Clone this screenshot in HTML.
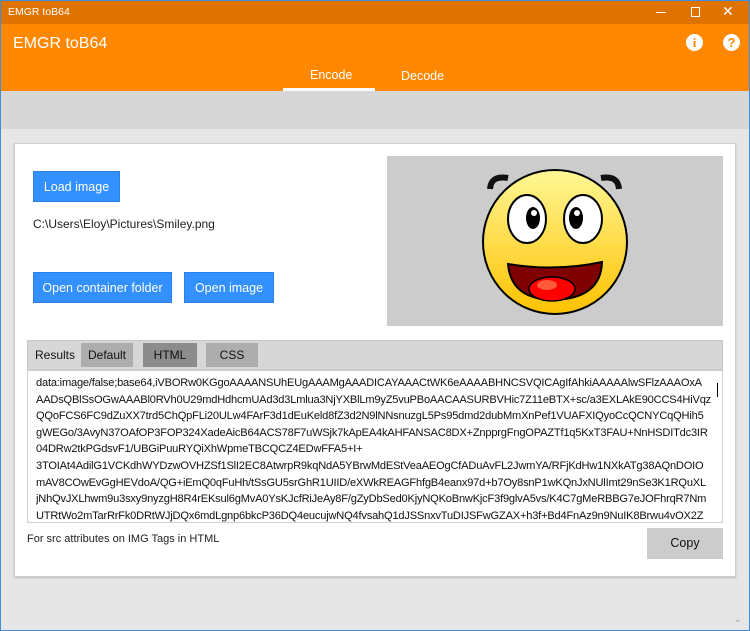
<!DOCTYPE html><html><head><style>
*{margin:0;padding:0;box-sizing:border-box}
body{width:750px;height:631px;overflow:hidden;font-family:"Liberation Sans",sans-serif;background:#e6e6e6;position:relative}
.a{position:absolute}
.btn{position:absolute;background:#3390ff;border:1px solid #2a80e8;color:#fff;font-size:12.5px;display:flex;align-items:center;justify-content:center}
.tx div{white-space:nowrap;overflow:hidden;height:16.6px}
</style></head><body>
<div class="a" style="left:0;top:0;width:750px;height:631px;border:1px solid #3c8fe0;z-index:5"></div>
<div class="a" style="left:0;top:0;width:750px;height:24px;background:#de7300"></div>
<div class="a" style="left:8px;top:6px;color:#fff;font-size:10.5px">EMGR toB64</div>
<div class="a" style="left:656px;top:12px;width:10px;height:1px;background:#fff"></div>
<div class="a" style="left:691px;top:7px;width:9px;height:10px;border:1px solid #fff"></div>
<div class="a" style="left:722px;top:3px;color:#fff;font-size:14px">✕</div>
<div class="a" style="left:0;top:24px;width:750px;height:67px;background:#ff8800"></div>
<div class="a" style="left:13px;top:35px;color:#fff;font-size:16px">EMGR toB64</div>
<div class="a" style="left:686px;top:34px;width:17px;height:17px;border-radius:50%;background:#fff;color:#ff8800;font:bold 13px 'Liberation Serif',serif;text-align:center;line-height:17px">i</div>
<div class="a" style="left:723px;top:34px;width:17px;height:17px;border-radius:50%;background:#fff;color:#ff8800;font:bold 13px 'Liberation Sans',sans-serif;text-align:center;line-height:17px">?</div>
<div class="a" style="left:310px;top:68px;color:#fff;font-size:12.5px">Encode</div>
<div class="a" style="left:401px;top:69px;color:#fff;font-size:12.5px">Decode</div>
<div class="a" style="left:283px;top:88px;width:92px;height:3px;background:#fff"></div>
<div class="a" style="left:0;top:91px;width:750px;height:38px;background:#d7d7d7"></div>
<div class="a" style="left:14px;top:143px;width:722px;height:434px;background:#fff;border:1px solid #cfcfcf;box-shadow:0 1px 2px #bbb"></div>
<div class="btn" style="left:33px;top:171px;width:87px;height:31px">Load image</div>
<div class="a" style="left:33px;top:217px;font-size:12px;color:#222">C:\Users\Eloy\Pictures\Smiley.png</div>
<div class="btn" style="left:33px;top:272px;width:139px;height:31px">Open container folder</div>
<div class="btn" style="left:184px;top:272px;width:90px;height:31px">Open image</div>
<div class="a" style="left:387px;top:156px;width:336px;height:170px;background:#cccccc">
<svg width="336" height="170" viewBox="0 0 336 170">
<defs><linearGradient id="g" x1="0" y1="0" x2="0" y2="1"><stop offset="0" stop-color="#fff796"/><stop offset="1" stop-color="#ffc200"/></linearGradient></defs>
<path d="M103 33 Q104 19 121 22" stroke="#111" stroke-width="6" fill="none"/>
<path d="M232 33 Q231 19 214 22" stroke="#111" stroke-width="6" fill="none"/>
<circle cx="168" cy="86" r="72" fill="url(#g)" stroke="#000" stroke-width="2"/>
<ellipse cx="140" cy="63" rx="19" ry="24" fill="#fff" stroke="#000" stroke-width="2"/>
<ellipse cx="196" cy="63" rx="19" ry="24" fill="#fff" stroke="#000" stroke-width="2"/>
<ellipse cx="146" cy="62" rx="7" ry="11" fill="#000"/><circle cx="147" cy="57" r="3" fill="#fff"/>
<ellipse cx="189" cy="62" rx="7" ry="11" fill="#000"/><circle cx="190" cy="57" r="3" fill="#fff"/>
<path d="M121 108 Q168 116 215 106 Q214 142 168 144 Q124 144 121 108Z" fill="#800000" stroke="#000" stroke-width="2"/>
<ellipse cx="165" cy="133" rx="23" ry="12" fill="#f00" stroke="#000" stroke-width="1.5"/>
<ellipse cx="160" cy="129" rx="10" ry="5" fill="#ff5a3a"/>
</svg></div>
<div class="a" style="left:27px;top:340px;width:696px;height:30px;background:#d7d7d7;border:1px solid #c8c8c8"></div>
<div class="a" style="left:35px;top:348px;font-size:12px;color:#111">Results</div>
<div class="a" style="left:81px;top:343px;width:52px;height:24px;background:#adadad;font-size:12px;text-align:center;line-height:24px;color:#111">Default</div>
<div class="a" style="left:143px;top:343px;width:54px;height:24px;background:#8c8c8c;font-size:12px;text-align:center;line-height:24px;color:#111">HTML</div>
<div class="a" style="left:206px;top:343px;width:52px;height:24px;background:#adadad;font-size:12px;text-align:center;line-height:24px;color:#111">CSS</div>
<div class="a tx" style="left:27px;top:370px;width:696px;height:153px;border:1px solid #cfcfcf;padding:6px 8px;font-size:11.1px;color:#111;overflow:hidden;letter-spacing:-0.2px">
<div>data:image/false;base64,iVBORw0KGgoAAAANSUhEUgAAAMgAAADICAYAAACtWK6eAAAABHNCSVQICAgIfAhkiAAAAAlwSFlzAAAOxA</div>
<div>AADsQBlSsOGwAAABl0RVh0U29mdHdhcmUAd3d3Lmlua3NjYXBlLm9yZ5vuPBoAACAASURBVHic7Z11eBTX+sc/a3EXLAkE90CCS4HiVqz</div>
<div>QQoFCS6FC9dZuXX7trd5ChQpFLi20ULw4FArF3d1dEuKeld8fZ3d2N9lNNsnuzgL5Ps95dmd2dubMmXnPef1VUAFXIQyoCcQCNYCqQHih5</div>
<div>gWEGo/3AvyN37OAfOP3FOP324XadeAicB64ACS78F7uWSjk7kApEA4kAHFANSAC8DX+ZnpprgFngOPAZTf1q5KxT3FAU+NnHSDITdc3IR</div>
<div>04DRw2tkPGdsvF1/UBGiPuuRYQiXhWpmeTBCQCZ4EDwFFA5+I+</div>
<div>3TOIAt4AdilG1VCKdhWYDzwOVHZSf1SlI2EC8AtwrpR9kqNdA5YBrwMdEStVeaAEOgCfADuAvFL2JwmYA/RFjKdHw1NXkATg38AQnDOIO</div>
<div>mAV8COwEvGgHEVdoA/QG+iEmQ0qFuHh/tSsGU5srGhR1UIID/eXWkREAGFhfgB4eanx97d+b7Oy8snP1wKQnJxNUlImt29nSe3K1RQuXL</div>
<div>jNhQvJXLhwm9u3sxy9nyzgH8R4rEKsul6gMvA0YsKJcfRiJeAy8F/gZyDbSed0KjyNQKoBnwKjcF3f9glvA5vs/K4C7gMeRBBG7eJOFhrqR7Nm</div>
<div>UTRtWo2mTarRrFk0DRtWJjDQx6mdLgnp6bkcP36DQ4eucujwNQ4fvsahQ1dJSSnxvTuDIJSFwGZAX+h3f+Bd4FnAz9n9NuIK8Brwu4vOX2Z</div>
<div>4E+F9AwHWWKJ4fTAIATkuHOcDz2BVgTW1t4fu4YNnmBH2cBrXAc0UHWzTHcNjUaJ2'Nrc63UHEz3aWPUbMsP24TcQUpAnrE4Y</div>
</div>
<div class="a" style="left:717px;top:383px;width:1px;height:14px;background:#000"></div>
<div class="a" style="left:27px;top:533px;font-size:11px;color:#222">For src attributes on IMG Tags in HTML</div>
<div class="a" style="left:647px;top:528px;width:76px;height:31px;background:#cccccc;font-size:12.5px;text-align:center;line-height:31px;color:#111">Copy</div>
<div class="a" style="left:734px;top:614px;font-size:9px;color:#999">⌄</div>
</body></html>
